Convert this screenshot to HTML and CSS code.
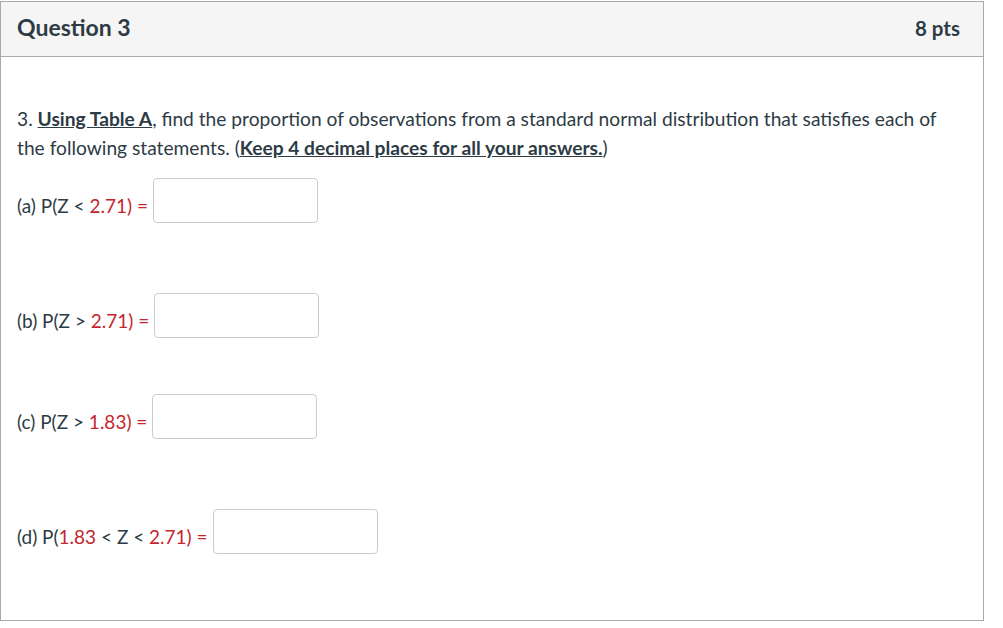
FILE: index.html
```html
<!DOCTYPE html>
<html>
<head>
<meta charset="utf-8">
<link rel="stylesheet" href="styles.css">
</head>
<body>
<div class="question">
  <div class="header">
    <span class="title">Question 3</span>
    <span class="pts">8 pts</span>
  </div>
  <div class="content">
    <p class="intro">3. <u class="strong">Using Table A</u>, find the proportion of observations from a standard normal distribution that satisfies each of the following statements. (<u class="strong">Keep 4 decimal places for all your answers.</u>)</p>
    <div class="row gap-lg">
      <span class="label">(a) P(Z &lt; <span class="red">2.71) =</span></span>
      <span class="input"></span>
    </div>
    <div class="row gap-md">
      <span class="label">(b) P(Z &gt; <span class="red">2.71) =</span></span>
      <span class="input"></span>
    </div>
    <div class="row gap-lg">
      <span class="label">(c) P(Z &gt; <span class="red">1.83) =</span></span>
      <span class="input"></span>
    </div>
    <div class="row">
      <span class="label">(d) P(<span class="red">1.83</span> &lt; Z &lt; <span class="red">2.71) =</span></span>
      <span class="input"></span>
    </div>
  </div>
</div>
</body>
</html>
```
FILE: styles.css
```css
html, body {
  margin: 0;
  padding: 0;
  background: #fff;
}
body {
  font-family: Lato, "Open Sans", sans-serif;
  color: #2d3b45;
  padding-top: 1px;
}
.question {
  width: 984px;
  height: 620px;
  border: 1px solid #a9a9a9;
  box-sizing: border-box;
}
.header {
  height: 55px;
  box-sizing: border-box;
  background: #f5f5f5;
  border-bottom: 1px solid #a9a9a9;
  display: flex;
  align-items: center;
  justify-content: space-between;
  padding: 0 23px 4px 16px;
}
.title {
  font-size: 23px;
  font-weight: 700;
}
.pts {
  font-size: 20.5px;
  font-weight: 700;
  margin-top: 2px;
}
.content {
  padding: 47px 16px 0;
}
.intro {
  margin: 0 0 16px;
  font-size: 19.2px;
  line-height: 29px;
}
.strong {
  font-weight: 700;
}
.row {
  display: flex;
  align-items: center;
  gap: 5px;
}
.gap-lg { margin-bottom: 70px; }
.gap-md { margin-bottom: 56px; }
.label {
  font-size: 19px;
  white-space: pre;
  padding-top: 10px;
}
.red {
  color: #c4262e;
}
.input {
  display: block;
  width: 163px;
  height: 43px;
  border: 1px solid #c7cdd1;
  border-radius: 4px;
  background: #fff;
}
```
